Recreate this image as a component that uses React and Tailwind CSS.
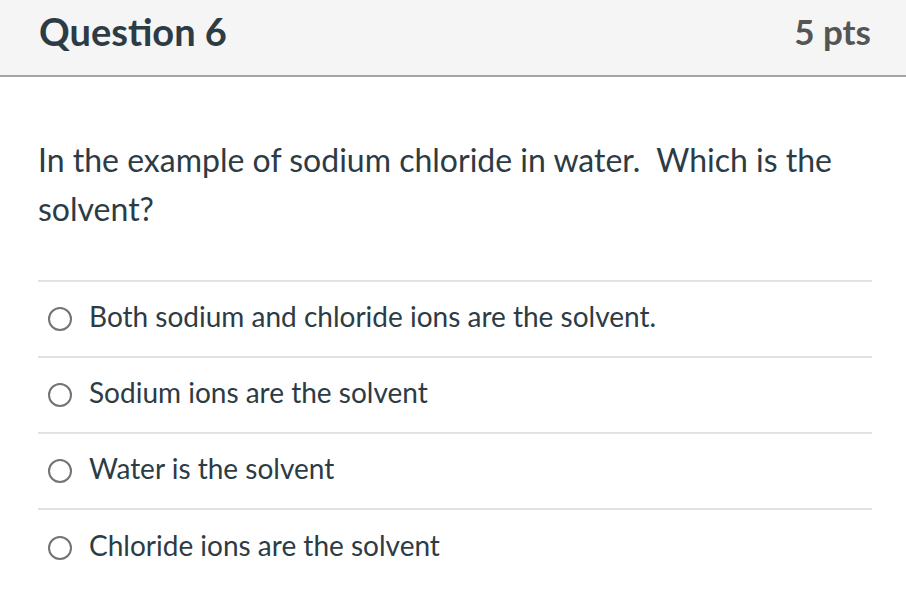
export default function App() {
  const answers = [
    "Both sodium and chloride ions are the solvent.",
    "Sodium ions are the solvent",
    "Water is the solvent",
    "Chloride ions are the solvent",
  ];

  return (
    <div className="min-h-[614px] bg-white text-[#2d3b45]" style={{ fontFamily: "Lato, 'Noto Sans', sans-serif" }}>
      <div className="flex h-[77px] items-center justify-between border-b-2 border-[#a5a5a5] bg-[#f5f5f5] pb-[12px] pl-[39px] pr-[35px]">
        <h1 className="text-[38px] font-bold">Question 6</h1>
        <span className="text-[35px] font-bold text-[#555]">5 pts</span>
      </div>

      <div className="pl-[38px] pr-[34px]">
        <p className="mt-[58px] text-[32px] leading-[49px]">
          In the example of sodium chloride in water.&nbsp; Which is the solvent?
        </p>

        <div className="mt-[47px] border-t-2 border-[#e2e2e2]">
          {answers.map((a) => (
            <label key={a} className="flex h-[76px] items-center gap-[17px] border-b-2 border-[#e2e2e2] pl-[10px] last:border-b-0">
              <span className="h-[24px] w-[24px] shrink-0 rounded-full border-2 border-[#737373] bg-white" />
              <span className="mb-[6px] text-[28px]">{a}</span>
            </label>
          ))}
        </div>
      </div>
    </div>
  );
}
